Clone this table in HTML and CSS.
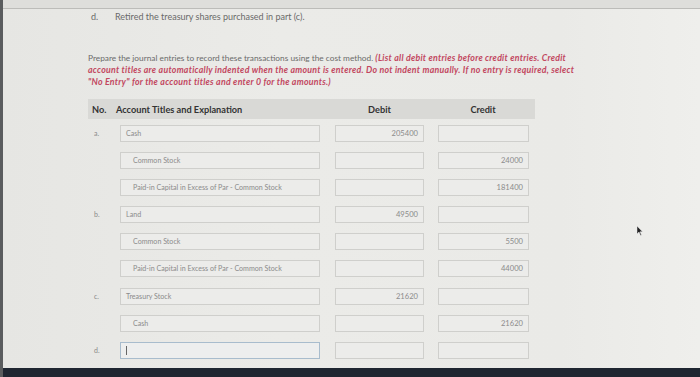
FILE: index.html
```html
<!DOCTYPE html>
<html>
<head>
<meta charset="utf-8">
<link rel="stylesheet" href="styles.css">
</head>
<body>
<div class="screen">
  <div class="topstrip"></div>
  <div class="content">
    <div class="item"><span class="item-no">d.</span><span>Retired the treasury shares purchased in part (c).</span></div>
    <p class="instructions">Prepare the journal entries to record these transactions using the cost method. <em>(List all debit entries before credit entries. Credit account titles are automatically indented when the amount is entered. Do not indent manually. If no entry is required, select "No Entry" for the account titles and enter 0 for the amounts.)</em></p>
    <div class="table">
      <div class="thead">
        <div class="th-no">No.</div>
        <div class="th-acct">Account Titles and Explanation</div>
        <div class="th-num debit">Debit</div>
        <div class="th-num credit">Credit</div>
      </div>
      <div class="rows">
        <div class="no">a.</div><div class="field">Cash</div><div class="field num">205400</div><div class="field num"></div>
        <div class="no"></div><div class="field indent">Common Stock</div><div class="field num"></div><div class="field num">24000</div>
        <div class="no"></div><div class="field indent">Paid-in Capital in Excess of Par - Common Stock</div><div class="field num"></div><div class="field num">181400</div>
        <div class="no">b.</div><div class="field">Land</div><div class="field num">49500</div><div class="field num"></div>
        <div class="no"></div><div class="field indent">Common Stock</div><div class="field num"></div><div class="field num">5500</div>
        <div class="no"></div><div class="field indent">Paid-in Capital in Excess of Par - Common Stock</div><div class="field num"></div><div class="field num">44000</div>
        <div class="no">c.</div><div class="field">Treasury Stock</div><div class="field num">21620</div><div class="field num"></div>
        <div class="no"></div><div class="field indent">Cash</div><div class="field num"></div><div class="field num">21620</div>
        <div class="no">d.</div><div class="field focus"><span class="caret"></span></div><div class="field num"></div><div class="field num"></div>
      </div>
    </div>
  </div>
  <svg class="cursor" width="7" height="10" viewBox="0 0 7 10"><path d="M1 0 L1 8 L3 6 L4.5 9.5 L5.5 9 L4 5.8 L6.5 5.8 Z" fill="#222" stroke="#eee" stroke-width="0.5"/></svg>
  <div class="bottombar"></div>
</div>
</body>
</html>
```
FILE: styles.css
```css
html, body {
  margin: 0;
  padding: 0;
}
body {
  width: 700px;
  height: 377px;
  overflow: hidden;
  background: #e9e9e6;
  font-family: Lato, "Open Sans", sans-serif;
}
.screen {
  position: relative;
  height: 377px;
  display: flex;
  flex-direction: column;
  border-left: 3px solid #5a5c5e;
  box-sizing: border-box;
  background: linear-gradient(90deg, #e6e6e3 0%, #ebebe8 40%, #eaeae7 80%, #efefec 100%);
}
.topstrip {
  height: 8px;
  background: #dededb;
  border-bottom: 1px solid #bcbcb9;
  flex: none;
}
.content {
  flex: 1;
  padding: 0 0 0 85px;
}
.item {
  margin-top: 2px;
  font-size: 9px;
  color: #6a6a6a;
  display: flex;
  height: 12px;
  line-height: 12px;
}
.item-no {
  width: 27px;
  padding-left: 3px;
  box-sizing: border-box;
}
.instructions {
  margin: 29px 0 0 0;
  width: 494px;
  font-size: 8.3px;
  line-height: 11px;
  color: #6b6b6b;
}
.instructions em {
  color: #c2475f;
  font-weight: bold;
  font-style: italic;
  font-size: 8.8px;
  letter-spacing: 0.25px;
}
.table {
  margin-top: 11px;
  width: 447px;
}
.thead {
  display: grid;
  grid-template-columns: 28px 219px 89px 14px 90px 7px;
  height: 20px;
  align-items: center;
  background: #d9d9d6;
  font-size: 9.2px;
  font-weight: bold;
  color: #333;
}
.thead .th-no {
  padding-left: 4px;
}
.th-num {
  text-align: center;
}
.th-num.debit {
  grid-column: 3;
}
.th-num.credit {
  grid-column: 5;
}
.rows {
  margin-top: 6px;
  display: grid;
  grid-template-columns: 17px 200px 89px 90px;
  column-gap: 15px;
  row-gap: 10.1px;
  grid-auto-rows: 17px;
}
.rows .field:nth-child(4n) {
  margin-left: -1px;
}
.no {
  font-size: 7px;
  color: #8a8a8a;
  padding-left: 6px;
  line-height: 17px;
}
.field {
  border: 1px solid #cfcfcc;
  background: #ececea;
  font-size: 7.1px;
  color: #8b8b8b;
  line-height: 15px;
  padding: 0 5px;
  box-sizing: border-box;
  white-space: nowrap;
  overflow: hidden;
}
.field.indent {
  padding-left: 12px;
}
.field.num {
  text-align: right;
  font-size: 7.6px;
}
.field.focus {
  border: 1.5px solid #a8bccd;
  background: #edeeee;
  display: flex;
  align-items: center;
}
.caret {
  width: 1px;
  height: 9px;
  background: #666;
}
.cursor {
  position: absolute;
  left: 633px;
  top: 226px;
}
.bottombar {
  height: 9px;
  flex: none;
  background: #1f2631;
}
```
